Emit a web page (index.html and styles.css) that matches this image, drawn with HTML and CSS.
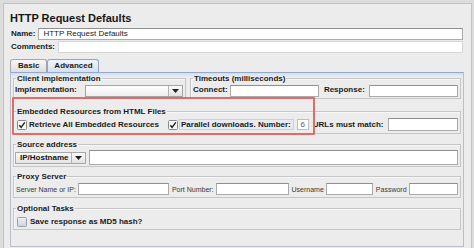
FILE: index.html
```html
<!DOCTYPE html>
<html>
<head>
<meta charset="utf-8">
<link rel="stylesheet" href="styles.css">
</head>
<body>
<div class="window">
  <h1 class="title">HTTP Request Defaults</h1>
  <div class="row name-row">
    <span class="lbl">Name:</span>
    <div class="textbox grow">HTTP Request Defaults</div>
  </div>
  <div class="row comments-row">
    <span class="lbl">Comments:</span>
    <div class="textbox grow plain"></div>
  </div>
  <div class="tabs">
    <span class="tab">Basic</span>
    <span class="tab active">Advanced</span>
  </div>
  <div class="panel">
    <div class="fs-row">
      <fieldset class="group client">
        <legend>Client implementation</legend>
        <div class="content c-client">
          <span class="lbl">Implementation:</span>
          <div class="combo impl">
            <span class="combo-text"></span>
            <span class="combo-btn"><svg width="7" height="4" viewBox="0 0 7 4"><path d="M0 0H7L3.5 4Z" fill="#222"/></svg></span>
          </div>
        </div>
      </fieldset>
      <fieldset class="group timeouts">
        <legend>Timeouts (milliseconds)</legend>
        <div class="content c-timeouts">
          <span class="lbl">Connect:</span>
          <div class="textbox grow t-connect"></div>
          <span class="lbl resp">Response:</span>
          <div class="textbox grow t-resp"></div>
        </div>
      </fieldset>
    </div>
    <fieldset class="group embedded">
      <legend>Embedded Resources from HTML Files</legend>
      <div class="content c-embedded">
        <svg class="cb" width="10" height="10" viewBox="0 0 10 10"><rect x="0.5" y="0.5" width="9" height="9" rx="1" fill="#f6f6f6" stroke="#8a8a8a"/><path d="M2.3 5.3L4.1 7.3L7.8 2.4" fill="none" stroke="#1e1e1e" stroke-width="1.4"/></svg>
        <span class="lbl cb-lbl">Retrieve All Embedded Resources</span>
        <svg class="cb cb2" width="10" height="10" viewBox="0 0 10 10"><rect x="0.5" y="0.5" width="9" height="9" rx="1" fill="#f6f6f6" stroke="#8a8a8a"/><path d="M2.3 5.3L4.1 7.3L7.8 2.4" fill="none" stroke="#1e1e1e" stroke-width="1.4"/></svg>
        <span class="lbl cb-lbl focus">Parallel downloads. Number:</span>
        <div class="textbox num">6</div>
        <span class="lbl urls">URLs must match:</span>
        <div class="textbox grow"></div>
      </div>
    </fieldset>
    <fieldset class="group source">
      <legend>Source address</legend>
      <div class="content c-source">
        <div class="combo ip">
          <span class="combo-text">IP/Hostname</span>
          <span class="combo-btn"><svg width="7" height="4" viewBox="0 0 7 4"><path d="M0 0H7L3.5 4Z" fill="#222"/></svg></span>
        </div>
        <div class="textbox grow src-input"></div>
      </div>
    </fieldset>
    <fieldset class="group proxy">
      <legend>Proxy Server</legend>
      <div class="content c-proxy">
        <span class="small">Server Name or IP:</span>
        <div class="textbox w-server"></div>
        <span class="small">Port Number:</span>
        <div class="textbox w-port"></div>
        <span class="small">Username</span>
        <div class="textbox w-user"></div>
        <span class="small">Password</span>
        <div class="textbox grow"></div>
      </div>
    </fieldset>
    <fieldset class="group optional">
      <legend>Optional Tasks</legend>
      <div class="content c-optional">
        <svg class="cb" width="10" height="10" viewBox="0 0 10 10"><defs><linearGradient id="ug" x1="0" y1="0" x2="0" y2="1"><stop offset="0" stop-color="#eef1f5"/><stop offset="1" stop-color="#cdd3db"/></linearGradient></defs><rect x="0.5" y="0.5" width="9" height="9" rx="1" fill="url(#ug)" stroke="#9aa0a8"/></svg>
        <span class="lbl cb-lbl md5">Save response as MD5 hash?</span>
      </div>
    </fieldset>
  </div>
</div>
<div class="highlight"></div>
</body>
</html>
```
FILE: styles.css
```css
* { box-sizing: border-box; }
html, body { margin: 0; padding: 0; }
body {
  width: 474px;
  height: 248px;
  overflow: hidden;
  position: relative;
  background: #dcdcdc;
  font-family: "Liberation Sans", Arial, sans-serif;
  color: #141414;
}
.window {
  margin: 3px 2px 0 3px;
  height: 245px;
  border: 1px solid #c2c2c2;
  border-bottom: none;
  background: #ececec;
  padding: 8px 7px 0 6px;
  display: flex;
  flex-direction: column;
}
.title {
  margin: 0;
  font-size: 11px;
  font-weight: bold;
  line-height: 13px;
  height: 13px;
  color: #161616;
}
.row { display: flex; align-items: center; height: 12px; }
.name-row { margin-top: 3px; }
.comments-row { margin-top: 1px; }
.lbl {
  font-size: 8px;
  font-weight: bold;
  line-height: 10px;
  white-space: nowrap;
  color: #1a1a1a;
}
.row .lbl { margin-left: 1px; margin-right: 3px; }
.grow { flex: 1; min-width: 0; }
.textbox {
  background: #fff;
  border: 1px solid #ababab;
  border-top-color: #8f8f8f;
  height: 12px;
  font-size: 8px;
  line-height: 10px;
  padding: 0 4px;
  white-space: nowrap;
  overflow: hidden;
  color: #222;
}
.row .textbox { margin-right: 1px; }
.comments-row .textbox { border-color: #d6d6d6; }
.tabs {
  margin-top: 6px;
  height: 13px;
  display: flex;
  align-items: flex-end;
}
.tab {
  font-size: 8px;
  font-weight: bold;
  line-height: 12px;
  height: 13px;
  border: 1px solid #a6a6a6;
  border-bottom: none;
  border-radius: 3px 3px 0 0;
  padding: 0 7px;
  background: linear-gradient(#f7f7f7, #dedede);
  color: #1a1a1a;
}
.tab.active {
  padding: 0 5px 0 6px;
  border-color: #8fa4c9;
  background: linear-gradient(#f1f5fb, #d5e0f0);
}
.panel {
  flex: 1;
  margin-bottom: 1px;
  border: 1px solid #b9bfc8;
  border-top-color: #93a8cf;
  background: linear-gradient(#d3def1 0, #e4eaf4 3px, #ececec 4px);
  padding: 0 2px;
}
.fs-row { display: flex; gap: 4px; }
.group {
  margin: 0;
  padding: 0;
  min-width: 0;
  border: 1px solid #c6c6c6;
  box-shadow: inset 1px 1px 0 #f7f7f7;
}
.group legend {
  font-size: 8px;
  font-weight: bold;
  line-height: 8px;
  padding: 2px 1px 0;
  margin-left: 2px;
  color: #1a1a1a;
}
.client { width: 173px; flex: none; }
.timeouts { flex: 1; }
.content { display: flex; align-items: center; }
.c-client { padding: 2px 2px 1px 1px; height: 15px; }
.c-client > *, .c-timeouts > * { height: 12px; }
.combo {
  display: flex;
  height: 12px;
  border: 1px solid #a4a4a4;
  background: linear-gradient(#ffffff, #eeeeee);
}
.impl { margin-left: auto; width: 98px; }
.combo-text {
  flex: 1;
  font-size: 8px;
  font-weight: bold;
  line-height: 10px;
  padding: 0 4px;
  white-space: nowrap;
}
.combo-btn {
  width: 14px;
  border-left: 1px solid #b4b4b4;
  display: flex;
  align-items: center;
  justify-content: center;
  background: linear-gradient(#fbfbfb, #e2e2e2);
}
.c-timeouts { padding: 2px 2px 1px 2px; height: 15px; }
.c-timeouts .lbl { margin-right: 2px; }
.c-timeouts .resp { margin-left: 5px; margin-right: 4px; }
.embedded { margin-top: 7px; }
.c-embedded { padding: 2px 2px 2px 3px; height: 17px; }
.c-embedded .textbox { height: 13px; }
.cb { flex: none; display: block; }
.cb-lbl { margin-left: 2px; }
.cb2 { margin-left: 9px; }
.focus {
  margin-left: 1px;
  padding: 0 2px 0 1px;
  border: 1px solid #c9d1dd;
  background: #e7ebf1;
  line-height: 9px;
}
.num {
  width: 12px;
  height: 11px !important;
  margin-left: 3px;
  padding: 0;
  text-align: center;
  line-height: 9px;
  border-color: #c0c0c0;
  color: #555;
}
.urls { margin-left: 4px; margin-right: 5px; }
.source { margin-top: 5px; }
.c-source { padding: 1px 2px 1px 1px; height: 17px; }
.ip { width: 71px; height: 12px; border-color: #a8a8a8; background: linear-gradient(#f8f8f8, #e4e4e4); }
.ip .combo-text { padding: 0 0 0 4px; }
.ip .combo-btn { width: 14px; flex: none; }
.src-input { height: 15px; margin-left: 3px; }
.proxy { margin-top: 4px; }
.c-proxy { padding: 2px 2px 2px 1px; height: 16px; }
.c-proxy .textbox { height: 12px; }
.small {
  font-size: 7px;
  line-height: 9px;
  white-space: nowrap;
  color: #3a3a3a;
  margin: 0 2px 0 3px;
}
.small:first-child { margin-left: 1px; }
.w-server { width: 91px; }
.w-port { width: 73px; }
.w-user { width: 47px; }
.optional { margin-top: 5px; }
.c-optional { padding: 3px 2px 1px 3px; height: 16px; }
.md5 { margin-left: 3px; }
.highlight {
  position: absolute;
  left: 12px;
  top: 97px;
  width: 303px;
  height: 38px;
  border: 2px solid #e46a6a;
  border-radius: 1px;
}
```
